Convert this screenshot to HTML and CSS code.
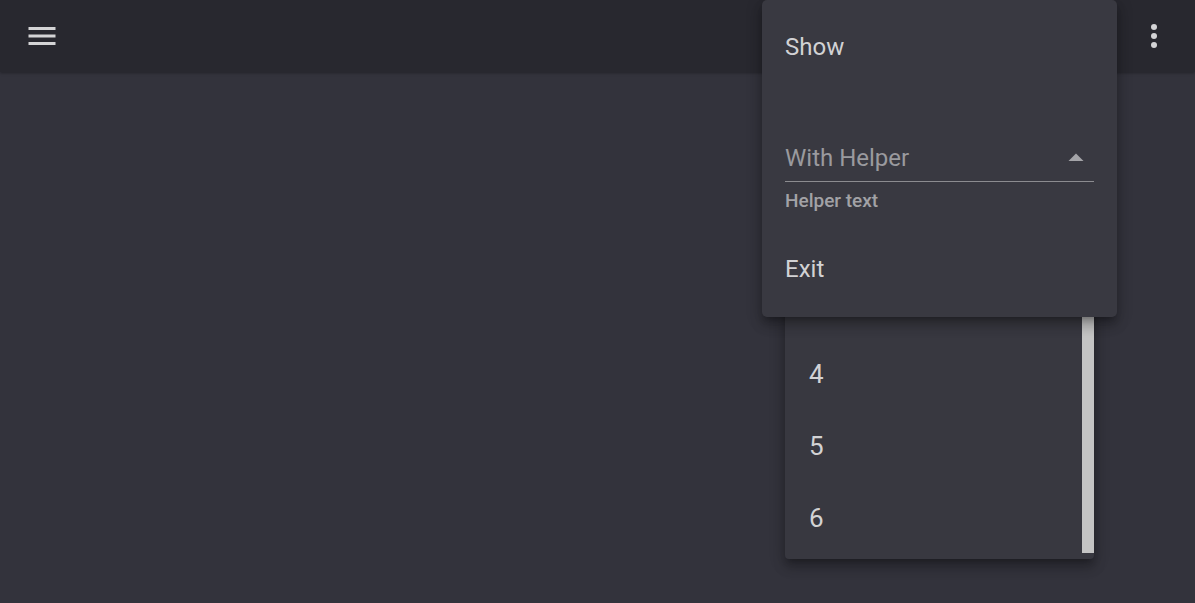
FILE: index.html
```html
<!DOCTYPE html>
<html lang="en">
<head>
    <meta charset="UTF-8">
    <meta name="viewport" content="width=device-width, initial-scale=1.0">
    <title>Menu</title>
    <link rel="stylesheet" href="styles.css">
</head>
<body>
    <!-- Top bar -->
    <header class="app-bar">
        <button class="icon-btn" aria-label="menu">
            <svg viewBox="0 0 24 24" width="36" height="36"><path d="M3 18h18v-2H3v2zm0-5h18v-2H3v2zm0-7v2h18V6H3z"/></svg>
        </button>
        <button class="icon-btn" aria-label="more">
            <svg viewBox="0 0 24 24" width="36" height="36"><circle cx="12" cy="6" r="2"/><circle cx="12" cy="12" r="2"/><circle cx="12" cy="18" r="2"/></svg>
        </button>
    </header>

    <main class="content"></main>

    <!-- Select popup (under the menu) -->
    <div class="select-popup">
        <ul class="select-list">
            <li class="select-option">3</li>
            <li class="select-option">4</li>
            <li class="select-option">5</li>
            <li class="select-option">6</li>
        </ul>
        <div class="scroll-thumb"></div>
    </div>

    <!-- Menu -->
    <div class="menu">
        <div class="menu-item">Show</div>
        <div class="menu-field">
            <div class="field-input">
                <span class="field-value">With Helper</span>
                <svg class="field-arrow" viewBox="0 0 24 24" width="36" height="36"><path d="M7 14l5-5 5 5z"/></svg>
            </div>
            <div class="field-helper">Helper text</div>
        </div>
        <div class="menu-item menu-item--last">Exit</div>
    </div>
</body>
</html>
```

FILE: styles.css
```css
:root {
    --bar: #28282f;
    --bg: #33333c;
    --paper: #393941;
    --text: #d2d2d4;
    --muted: #9a9a9e;
}

* {
    margin: 0;
    padding: 0;
    box-sizing: border-box;
}

body {
    font-family: Roboto, 'Liberation Sans', sans-serif;
    background: var(--bg);
    color: var(--text);
    width: 1195px;
    height: 603px;
    overflow: hidden;
    position: relative;
}

/* Top bar */
.app-bar {
    height: 72px;
    background: var(--bar);
    display: flex;
    justify-content: space-between;
    align-items: center;
    padding: 0 23px 0 24px;
    box-shadow: 0 1px 3px rgba(0, 0, 0, 0.35);
    position: relative;
    z-index: 1;
}

.icon-btn {
    width: 36px;
    height: 36px;
    border: none;
    background: none;
    display: flex;
}

.icon-btn svg {
    fill: #d4d4d6;
}

.content {
    height: 531px;
}

/* Menu popover */
.menu {
    position: absolute;
    top: 0;
    left: 762px;
    width: 355px;
    height: 317px;
    background: var(--paper);
    border-radius: 5px;
    padding-top: 9px;
    box-shadow: 0 5px 6px -3px rgba(0, 0, 0, 0.25), 0 9px 12px 1px rgba(0, 0, 0, 0.16), 0 3px 16px 2px rgba(0, 0, 0, 0.14);
    z-index: 3;
}

.menu-item {
    font-size: 24px;
    line-height: 28px;
    padding: 24px 23px;
}

.menu-item--last {
    padding-top: 44px;
}

.menu-field {
    padding: 55px 23px 0;
}

.field-input {
    display: flex;
    justify-content: space-between;
    align-items: flex-start;
    border-bottom: 1px solid #8c8c90;
    padding-bottom: 13px;
    height: 42px;
}

.field-value {
    font-size: 24px;
    line-height: 28px;
    color: var(--muted);
    margin-top: 4px;
}

.field-arrow {
    fill: #a4a4a8;
    flex-shrink: 0;
}

.field-helper {
    font-size: 19px;
    font-weight: 500;
    line-height: 21px;
    color: #a2a2a6;
    margin-top: 8px;
}

/* Select list popup */
.select-popup {
    position: absolute;
    left: 785px;
    top: 262px;
    width: 309px;
    height: 297px;
    background: #383840;
    border-radius: 4px;
    box-shadow: 0 5px 6px -3px rgba(0, 0, 0, 0.25), 0 9px 12px 1px rgba(0, 0, 0, 0.16), 0 3px 16px 2px rgba(0, 0, 0, 0.14);
    overflow: hidden;
    z-index: 2;
}

.select-list {
    list-style: none;
    padding: 4px 0 5px;
}

.select-option {
    height: 72px;
    display: flex;
    align-items: center;
    padding-left: 24px;
    font-size: 26px;
    color: var(--text);
}

.scroll-thumb {
    position: absolute;
    right: 0;
    bottom: 6px;
    width: 12px;
    height: 250px;
    background: #c4c4c4;
}
```
